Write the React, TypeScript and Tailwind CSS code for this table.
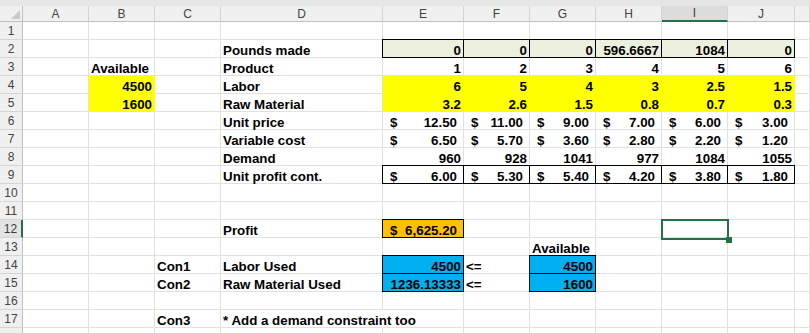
import React from "react";

type Fill = "yellow" | "green" | "orange" | "blue";
type Cell = {
  v?: string;
  acc?: string;
  r?: boolean;
  fill?: Fill;
  box?: boolean;
  over?: boolean;
  sel?: boolean;
};

const LETTERS = ["A", "B", "C", "D", "E", "F", "G", "H", "I", "J", ""];

const e = (): Cell => ({});
const L = (v: string, extra: Partial<Cell> = {}): Cell => ({ v, ...extra });
const R = (v: string, extra: Partial<Cell> = {}): Cell => ({ v, r: true, ...extra });
const A = (acc: string, extra: Partial<Cell> = {}): Cell => ({ acc, ...extra });

const blank = (): Cell[] => Array.from({ length: 11 }, e);

function buildRows(): Cell[][] {
  const rows: Cell[][] = [];
  for (let i = 0; i < 18; i++) rows.push(blank());
  const set = (row: number, col: number, c: Cell) => {
    rows[row - 1][col] = c;
  };
  // columns: A=0 B=1 C=2 D=3 E=4 F=5 G=6 H=7 I=8 J=9 K=10
  set(2, 3, L("Pounds made"));
  ["0", "0", "0", "596.6667", "1084", "0"].forEach((v, i) =>
    set(2, 4 + i, R(v, { fill: "green", box: true }))
  );
  set(3, 1, L("Available"));
  set(3, 3, L("Product"));
  ["1", "2", "3", "4", "5", "6"].forEach((v, i) => set(3, 4 + i, R(v)));
  set(4, 1, R("4500", { fill: "yellow" }));
  set(4, 3, L("Labor"));
  ["6", "5", "4", "3", "2.5", "1.5"].forEach((v, i) =>
    set(4, 4 + i, R(v, { fill: "yellow" }))
  );
  set(5, 1, R("1600", { fill: "yellow" }));
  set(5, 3, L("Raw Material"));
  ["3.2", "2.6", "1.5", "0.8", "0.7", "0.3"].forEach((v, i) =>
    set(5, 4 + i, R(v, { fill: "yellow" }))
  );
  set(6, 3, L("Unit price"));
  ["12.50", "11.00", "9.00", "7.00", "6.00", "3.00"].forEach((v, i) =>
    set(6, 4 + i, A(v))
  );
  set(7, 3, L("Variable cost"));
  ["6.50", "5.70", "3.60", "2.80", "2.20", "1.20"].forEach((v, i) =>
    set(7, 4 + i, A(v))
  );
  set(8, 3, L("Demand"));
  ["960", "928", "1041", "977", "1084", "1055"].forEach((v, i) =>
    set(8, 4 + i, R(v))
  );
  set(9, 3, L("Unit profit cont."));
  ["6.00", "5.30", "5.40", "4.20", "3.80", "1.80"].forEach((v, i) =>
    set(9, 4 + i, A(v, { box: true }))
  );
  set(12, 3, L("Profit"));
  set(12, 4, A("6,625.20", { fill: "orange", box: true }));
  set(12, 8, { sel: true });
  set(13, 6, L("Available"));
  set(14, 2, L("Con1"));
  set(14, 3, L("Labor Used"));
  set(14, 4, R("4500", { fill: "blue", box: true }));
  set(14, 5, L("<="));
  set(14, 6, R("4500", { fill: "blue", box: true }));
  set(15, 2, L("Con2"));
  set(15, 3, L("Raw Material Used"));
  set(15, 4, R("1236.13333", { fill: "blue", box: true }));
  set(15, 5, L("<="));
  set(15, 6, R("1600", { fill: "blue", box: true }));
  set(17, 2, L("Con3"));
  set(17, 3, L("* Add a demand constraint too", { over: true }));
  return rows;
}

const FILL_BG: Record<Fill, string> = {
  yellow: "bg-[#ffff00]",
  green: "bg-[#ebf1de]",
  orange: "bg-[#ffc000]",
  blue: "bg-[#00b0f0]",
};

function cellClasses(c: Cell): string {
  const parts = [
    "relative h-[18px] border-r border-b flex items-end whitespace-nowrap text-black",
  ];
  if (c.box) {
    parts.push(
      "border-black shadow-[-1px_-1px_0_#000,0_-1px_0_#000,-1px_0_0_#000]"
    );
  } else if (c.fill === "yellow") {
    parts.push("border-[#ffff00]");
  } else if (c.over) {
    parts.push("border-b-[#e1e1e1] border-r-transparent");
  } else {
    parts.push("border-[#e1e1e1]");
  }
  if (c.fill) parts.push(FILL_BG[c.fill]);
  if (c.acc) parts.push("justify-between pl-[7px] pr-[6px]");
  else if (c.r) parts.push("justify-end pr-[2px]");
  else parts.push("justify-start pl-[2px]");
  if (c.sel) parts.push("z-10");
  return parts.join(" ");
}

function SheetCell({ c }: { c: Cell }) {
  return (
    <div className={cellClasses(c)}>
      {c.acc ? (
        <>
          <span>$</span>
          <span>{c.acc}</span>
        </>
      ) : (
        c.v && <span>{c.v}</span>
      )}
      {c.sel && (
        <div className="absolute left-[-1px] top-[-1px] w-[68px] h-[21px] border-2 border-[#217346] pointer-events-none z-10">
          <div className="absolute right-[-5px] bottom-[-5px] w-[6px] h-[6px] bg-[#217346]" />
        </div>
      )}
    </div>
  );
}

export default function App() {
  const rows = buildRows();
  return (
    <div className="w-[810px] h-[333px] overflow-hidden bg-white font-['Liberation_Sans',Arial,sans-serif]">
      <div className="h-[6px] bg-[#e6e6e6]" />
      <div className="grid grid-cols-[23px_66px_66px_66px_162px_81px_66px_66px_66px_66px_67px_1fr]">
        {/* select-all corner */}
        <div className="relative h-[16px] bg-[#f0f0f0] border-r border-b border-r-[#c0c0c0] border-b-[#c0c0c0]">
          <svg
            className="absolute left-[11px] top-[4px]"
            width="9"
            height="9"
            viewBox="0 0 9 9"
          >
            <polygon points="9,0 9,9 0,9" fill="#c9c9c9" />
          </svg>
        </div>
        {LETTERS.map((l, i) => (
          <div
            key={"h" + i}
            className={
              l === "I"
                ? "h-[16px] bg-[#dcdcdc] border-r border-r-[#d4d4d4] border-b-2 border-b-[#217346] flex items-center justify-center text-[12px] text-[#3c3c3c]"
                : "h-[16px] bg-[#f0f0f0] border-r border-r-[#d4d4d4] border-b border-b-[#c0c0c0] flex items-center justify-center text-[12px] text-[#444]"
            }
          >
            {l}
          </div>
        ))}
        {rows.map((row, ri) => (
          <React.Fragment key={"r" + ri}>
            <div
              className={
                ri === 11
                  ? "h-[18px] bg-[#e3e3e3] border-r-2 border-r-[#217346] border-b border-b-[#d4d4d4] flex items-center justify-center text-[12px] text-[#3c3c3c]"
                  : "h-[18px] bg-[#f0f0f0] border-r border-r-[#c0c0c0] border-b border-b-[#d4d4d4] flex items-center justify-center text-[12px] text-[#444]"
              }
            >
              {ri < 17 ? ri + 1 : ""}
            </div>
            {row.map((c, ci) => (
              <div
                key={"c" + ri + "-" + ci}
                className="text-[13.33px] font-bold leading-[13px]"
              >
                <SheetCell c={c} />
              </div>
            ))}
          </React.Fragment>
        ))}
      </div>
    </div>
  );
}
